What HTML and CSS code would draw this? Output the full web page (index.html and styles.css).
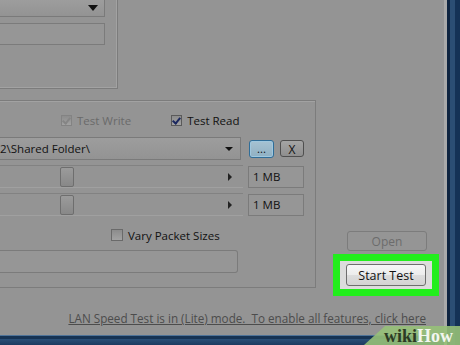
FILE: index.html
```html
<!DOCTYPE html>
<html lang="en">

<head>
    <meta charset="UTF-8">
    <meta name="viewport" content="width=device-width, initial-scale=1.0">
    <title>LAN Speed Test</title>
    <link rel="stylesheet" href="styles.css">
</head>

<body>
    <div class="screen">
        <main class="client">
            <section class="top-panel">
                <div class="combo short"><span class="arrow-down"></span></div>
                <div class="field short"></div>
            </section>

            <div class="middle">
                <section class="group">
                    <div class="checks">
                        <label class="check disabled"><span class="box ticked"></span>Test Write</label>
                        <label class="check"><span class="box ticked"></span>Test Read</label>
                    </div>
                    <div class="path-row">
                        <div class="combo path"><span>2\Shared Folder\</span><span class="arrow-down"></span></div>
                        <button class="btn browse">...</button>
                        <button class="btn clear">X</button>
                    </div>
                    <div class="size-row">
                        <div class="slider"><span class="thumb"></span><span class="arrow-right"></span></div>
                        <div class="field size">1 MB</div>
                    </div>
                    <div class="size-row">
                        <div class="slider"><span class="thumb"></span><span class="arrow-right"></span></div>
                        <div class="field size">1 MB</div>
                    </div>
                    <div class="vary">
                        <label class="check"><span class="box"></span>Vary Packet Sizes</label>
                    </div>
                    <div class="field wide"></div>
                </section>

                <aside class="actions">
                    <button class="btn open" disabled>Open</button>
                    <div class="highlight">
                        <button class="btn start">Start Test</button>
                    </div>
                </aside>
            </div>

            <p class="status"><a href="#">LAN Speed Test is in (Lite) mode.&nbsp; To enable all features, click here</a></p>
        </main>
        <div class="frame-right"></div>
        <div class="frame-bottom"></div>
        <div class="wikihow"><span class="wiki">wiki</span><span class="how">How</span></div>
    </div>
</body>

</html>
```

FILE: styles.css
```css
body {
    margin: 0;
    background-color: #949494;
    font-family: "Open Sans", "Noto Sans", sans-serif;
    font-size: 11.5px;
    color: #111;
}

.screen {
    position: relative;
    width: 460px;
    height: 345px;
    overflow: hidden;
    display: grid;
    grid-template-columns: 444px 16px;
    grid-template-rows: 335px 10px;
}

.client {
    grid-column: 1;
    grid-row: 1;
    display: flex;
    flex-direction: column;
    background-color: #949494;
}

/* window frame */
.frame-right {
    grid-column: 2;
    grid-row: 1 / span 2;
    background: linear-gradient(to right, #a9a9a9 0, #a9a9a9 3px, #0e2440 3px, #0e2440 6px, #2b4e74 6px, #2b4e74 11px, #143256 11px);
}

.frame-bottom {
    grid-column: 1;
    grid-row: 2;
    background: linear-gradient(to bottom, #4f7398 0, #4f7398 1px, #163354 1px, #163354 4px, #2a4f77 4px, #1c3b60 100%);
}

/* top panel, cut off by the picture edge */
.top-panel {
    width: 117px;
    height: 88px;
    border-right: 1px solid #7c7c7c;
    border-bottom: 1px solid #7c7c7c;
    box-shadow: inset -1px -1px 0 #a2a2a2;
}

.combo {
    display: flex;
    align-items: center;
    justify-content: space-between;
    box-sizing: border-box;
    background: linear-gradient(#9d9d9d, #939393);
    border: 1px solid #7a7a7a;
}

.combo.short {
    width: 105px;
    height: 17px;
    border-top: none;
    border-left: none;
    justify-content: flex-end;
    padding-right: 6px;
}

.arrow-down {
    width: 0;
    height: 0;
    border-left: 5px solid transparent;
    border-right: 5px solid transparent;
    border-top: 6px solid #111;
}

.combo.path .arrow-down {
    border-left-width: 4px;
    border-right-width: 4px;
    border-top-width: 4px;
}

.field {
    box-sizing: border-box;
    background-color: #969696;
    border: 1px solid #7b7b7b;
    display: flex;
    align-items: center;
}

.field.short {
    width: 105px;
    height: 22px;
    margin-top: 6px;
    border-left: none;
}

/* main group box */
.middle {
    display: grid;
    grid-template-columns: 316px 1fr;
    align-items: start;
    margin-top: 11px;
}

.group {
    box-sizing: border-box;
    height: 188px;
    border-top: 1px solid #7c7c7c;
    border-right: 1px solid #7c7c7c;
    border-bottom: 1px solid #7c7c7c;
    box-shadow: inset 0 1px 0 #a2a2a2;
    padding-top: 12px;
    display: flex;
    flex-direction: column;
}

.checks {
    display: flex;
    height: 15px;
    align-items: center;
    padding-left: 61px;
    gap: 40px;
}

.check {
    display: flex;
    align-items: center;
    gap: 5px;
    white-space: nowrap;
}

.check.disabled {
    color: #6a6a6a;
}

.box {
    width: 11px;
    height: 11px;
    box-sizing: border-box;
    border: 1px solid #5a5a5a;
    background: linear-gradient(#8c8c8c, #a2a2a2);
    display: flex;
    align-items: center;
    justify-content: center;
}

.check.disabled .box {
    border-color: #838383;
}

.box.ticked::after {
    content: "";
    width: 3px;
    height: 6px;
    border-right: 2px solid #1b2860;
    border-bottom: 2px solid #1b2860;
    transform: translateY(-1px) rotate(40deg);
}

.check.disabled .box.ticked::after {
    border-color: #858585;
}

.path-row {
    display: flex;
    align-items: center;
    margin-top: 9px;
    height: 23px;
}

.combo.path {
    width: 241px;
    height: 23px;
    border-left: none;
    padding-right: 7px;
}

.btn {
    font-family: inherit;
    font-size: 11.5px;
    color: #111;
    padding: 0;
    box-sizing: border-box;
    border: 1px solid #4f4f4f;
    border-radius: 3px;
    background: linear-gradient(#a5a5a5, #8e8e8e);
}

.btn.browse {
    width: 25px;
    height: 18px;
    margin-left: 8px;
    border-color: #2f6d98;
    background: linear-gradient(#a6c2d2, #8fb0c3);
    box-shadow: inset 0 0 0 1px #9fc7de;
    line-height: 10px;
}

.btn.clear {
    width: 24px;
    height: 17px;
    margin-left: 6px;
    font-size: 12px;
}

.size-row {
    display: flex;
    align-items: center;
    margin-top: 5px;
    height: 23px;
}

.size-row + .size-row {
    margin-top: 5px;
}

.slider {
    width: 243px;
    height: 23px;
    box-sizing: border-box;
    border-top: 1px solid #828282;
    border-bottom: 1px solid #a0a0a0;
    display: flex;
    align-items: center;
    padding-left: 60px;
    padding-right: 11px;
    justify-content: space-between;
}

.thumb {
    width: 14px;
    height: 20px;
    box-sizing: border-box;
    border: 1px solid #6e6e6e;
    border-radius: 2px;
    background: linear-gradient(#9b9b9b, #888);
}

.arrow-right {
    width: 0;
    height: 0;
    border-top: 4px solid transparent;
    border-bottom: 4px solid transparent;
    border-left: 4px solid #222;
}

.field.size {
    width: 56px;
    height: 22px;
    margin-left: 5px;
    padding-left: 4px;
}

.vary {
    display: flex;
    height: 14px;
    align-items: center;
    margin-top: 12px;
    padding-left: 111px;
}

.vary .box {
    width: 12px;
    height: 12px;
    border-color: #6a6a6a;
}

.field.wide {
    width: 238px;
    height: 23px;
    margin-top: 8px;
    border-left: none;
    border-radius: 0 3px 3px 0;
}

/* right buttons */
.actions {
    display: flex;
    flex-direction: column;
    padding-top: 131px;
}

.btn.open {
    width: 80px;
    height: 20px;
    margin-left: 31px;
    color: #6c6c6c;
    border-color: #7c7c7c;
    background: #959595;
    font-size: 12px;
}

.highlight {
    width: 92px;
    height: 28px;
    margin-left: 17px;
    margin-top: 3px;
    border: 7px solid #22ee1c;
    background-color: #dcdcdc;
    display: flex;
    align-items: center;
    justify-content: center;
}

.btn.start {
    width: 80px;
    height: 22px;
    font-size: 12.5px;
    border-color: #6e6e6e;
    background: linear-gradient(#f6f6f6 0, #ececec 50%, #dddddd 50%, #d3d3d3 100%);
}

.status {
    margin: 15px 0 0;
    padding-right: 18px;
    text-align: right;
    font-size: 11.7px;
    line-height: 15px;
}

.status a {
    color: #4c4c4c;
    white-space: nowrap;
}

/* watermark over the corner */
.wikihow {
    position: absolute;
    right: 0;
    bottom: 0;
    width: 96px;
    height: 19px;
    padding-left: 20px;
    box-sizing: border-box;
    background-color: rgba(150, 192, 120, 0.9);
    clip-path: polygon(21px 0, 100% 0, 100% 100%, 0 100%);
    font-family: "Liberation Serif", serif;
    font-weight: bold;
    font-size: 18px;
    line-height: 20px;
}

.wiki {
    color: #2c3a24;
}

.how {
    color: #f3f6ef;
}
```
